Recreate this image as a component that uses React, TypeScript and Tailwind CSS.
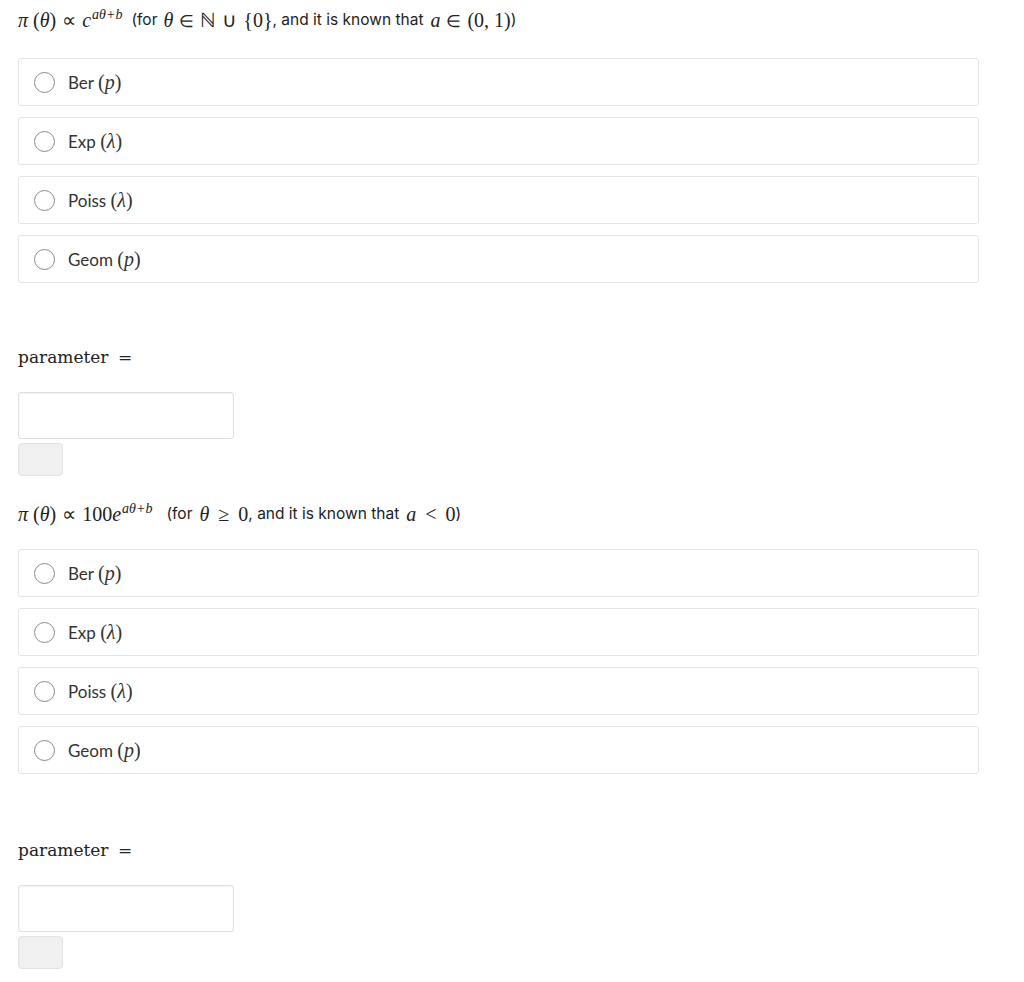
import React from 'react';

const M = ({ children, i = false, className = '' }: { children: React.ReactNode; i?: boolean; className?: string }) => (
    <span className={`font-['Liberation_Serif',serif] ${i ? 'italic' : ''} ${className}`}>{children}</span>
);

const Rel = ({ children, small = false, wide = false }: { children: React.ReactNode; small?: boolean; wide?: boolean }) => (
    <span className={`${wide ? 'mx-[9px]' : 'mx-[6px]'} ${small ? 'text-[17px]' : ''}`}>{children}</span>
);

const Sup = ({ children }: { children: React.ReactNode }) => (
    <sup className="text-[14px] italic font-['Liberation_Serif',serif] relative -top-[8px] ml-[1px]">{children}</sup>
);

const Option = ({ name, arg }: { name: string; arg: string }) => (
    <div className="h-[48px] border border-[#e4e4e4] rounded-[3px] flex items-center pl-[15px]">
        <div className="w-[21px] h-[21px] rounded-full border border-[#8a8a8a] bg-white"></div>
        <span className="ml-[13px] text-[17px] text-[#333] font-['Lato',sans-serif]">
            {name} <M className="text-[20px]">(<M i>{arg}</M>)</M>
        </span>
    </div>
);

const Options = () => (
    <div className="flex flex-col gap-[11px] w-[961px]">
        <Option name="Ber" arg="p" />
        <Option name="Exp" arg="λ" />
        <Option name="Poiss" arg="λ" />
        <Option name="Geom" arg="p" />
    </div>
);

const ParamBlock = () => (
    <div>
        <div className="text-[17px] text-[#222] font-['DejaVu_Serif',serif] leading-[24px] h-[24px]">
            parameter <span className="ml-[4px]">=</span>
        </div>
        <div className="mt-[23px] w-[216px] h-[47px] border border-[#dedede] rounded-[3px] shadow-[inset_0_1px_2px_rgba(0,0,0,0.05)]"></div>
        <div className="mt-[4px] w-[45px] h-[33px] bg-[#f0f0f0] border border-[#e2e2e2] rounded-[4px]"></div>
    </div>
);

export default function App() {
    return (
        <div className="bg-white w-[1024px] h-[982px] pl-[18px] text-[#222]">
            <div className="pt-[10px] h-[30px] flex items-center text-[15.5px] font-['Inter',sans-serif] whitespace-nowrap">
                <M className="text-[20px]"><M i>π</M> (<M i>θ</M>)<Rel>∝</Rel><M i>c</M><Sup>aθ+b</Sup></M>
                <span className="ml-[9px]">(for</span>
                <M className="text-[20px] ml-[6px]"><M i>θ</M><Rel small>∈</Rel>ℕ<Rel>∪</Rel>{'{'}0{'}'}</M>
                <span>, and it is known that</span>
                <M className="text-[20px] ml-[7px]"><M i>a</M><Rel small>∈</Rel>(0, 1)</M>
                <span>)</span>
            </div>
            <div className="mt-[28px]">
                <Options />
            </div>
            <div className="mt-[62px]">
                <ParamBlock />
            </div>
            <div className="mt-[28px] h-[20px] flex items-center text-[15.5px] font-['Inter',sans-serif] whitespace-nowrap">
                <M className="text-[20px]"><M i>π</M> (<M i>θ</M>)<Rel>∝</Rel>100<M i>e</M><Sup>aθ+b</Sup></M>
                <span className="ml-[14px]">(for</span>
                <M className="text-[20px] ml-[7px]"><M i>θ</M><Rel wide>≥</Rel>0</M>
                <span>, and it is known that</span>
                <M className="text-[20px] ml-[7px]"><M i>a</M><Rel wide>&lt;</Rel>0</M>
                <span>)</span>
            </div>
            <div className="mt-[25px]">
                <Options />
            </div>
            <div className="mt-[64px]">
                <ParamBlock />
            </div>
        </div>
    );
}
